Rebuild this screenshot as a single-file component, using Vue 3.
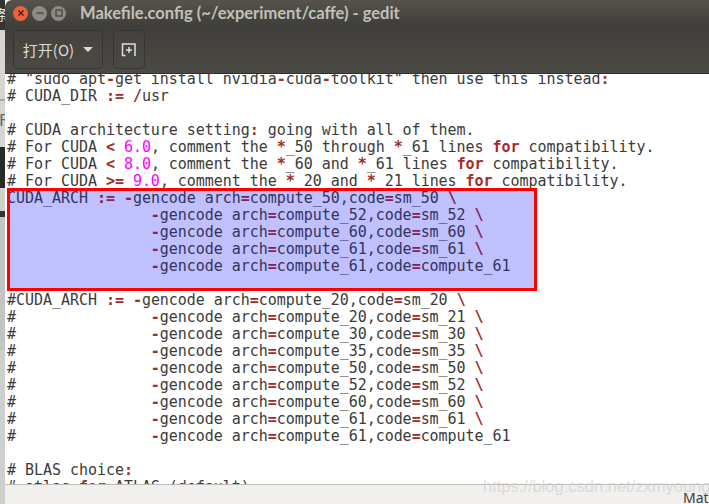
<script setup>
const N = (t) => ({ t })
const K = (t) => ({ t, c: 'k' })
const M = (t) => ({ t, c: 'm' })
const B = (t) => ({ t, c: 'b' })
const top = [
  [N('# "sudo apt'), K('-'), N('get install nvidia'), K('-'), N('cuda'), K('-'), N('toolkit" then use this instead'), K(':')],
  [N('# CUDA_DIR '), K(':='), N(' '), K('/'), N('usr')],
  [N(' ')],
  [N('# CUDA architecture setting'), K(':'), N(' going with all of them.')],
  [N('# For CUDA '), K('<'), N(' '), M('6.0'), N(', comment the '), K('*'), N('_50 through '), K('*'), N('_61 lines '), B('for'), N(' compatibility.')],
  [N('# For CUDA '), K('<'), N(' '), M('8.0'), N(', comment the '), K('*'), N('_60 and '), K('*'), N('_61 lines '), B('for'), N(' compatibility.')],
  [N('# For CUDA '), K('>='), N(' '), M('9.0'), N(', comment the '), K('*'), N('_20 and '), K('*'), N('_21 lines '), B('for'), N(' compatibility.')],
]
const gen = (pre, a, c, tail = true) => {
  const out = [N(pre), K('-'), N('gencode arch'), K('='), N('compute_' + a + ',code'), K('='), N(c)]
  if (tail) out.push(N(' '), K('\\'))
  return out
}
const sel = [
  [N('CUDA_ARCH '), K(':='), N(' '), ...gen('', '50', 'sm_50')],
  gen('                ', '52', 'sm_52'),
  gen('                ', '60', 'sm_60'),
  gen('                ', '61', 'sm_61'),
  gen('                ', '61', 'compute_61', false),
  [N(' ')],
]
const p = '#               '
const rest = [
  [N('#CUDA_ARCH '), K(':='), N(' '), ...gen('', '20', 'sm_20')],
  gen(p, '20', 'sm_21'),
  gen(p, '30', 'sm_30'),
  gen(p, '35', 'sm_35'),
  gen(p, '50', 'sm_50'),
  gen(p, '52', 'sm_52'),
  gen(p, '60', 'sm_60'),
  gen(p, '61', 'sm_61'),
  gen(p, '61', 'compute_61', false),
  [N(' ')],
  [N('# BLAS choice'), K(':')],
  [N('# atlas '), B('for'), N(' ATLAS (default)')],
]
const blocks = [
  { cls: '', lines: top },
  { cls: 'sel', lines: sel },
  { cls: '', lines: rest },
]
</script>

<template>
  <div class="screen">
    <div class="edge">
      <span class="frag cjk">条</span>
      <span class="frag f">F</span>
    </div>
    <div class="win">
      <header class="title">
        <div class="dots">
          <span class="dot close"><svg width="8" height="8" viewBox="0 0 8 8"><path d="M1.500 1.500l5 5M6.500 1.500l-5 5" stroke="#4a1a0c" stroke-width="1.300" /></svg></span>
          <span class="dot"><svg width="8" height="8" viewBox="0 0 8 8"><path d="M0.500 4h7" stroke="#3b3a36" stroke-width="1.200" /></svg></span>
          <span class="dot"><svg width="8" height="8" viewBox="0 0 8 8"><rect x="1" y="1" width="6" height="6" fill="none" stroke="#3b3a36" stroke-width="1.100" /></svg></span>
        </div>
        <span class="name">Makefile.config (~/experiment/caffe) - gedit</span>
      </header>
      <div class="tools">
        <div class="btn open">打开(O)<i class="caret"></i></div>
        <div class="btn new">
          <svg width="16" height="15" viewBox="0 0 16 15"><path d="M1.500 14V2H14V14M1 13.500H4.500M5 8h6M8 5v6" fill="none" stroke="#e0dfd9" stroke-width="1.500" /></svg>
        </div>
      </div>
      <main class="editor">
        <div v-for="(b, i) in blocks" :key="i" :class="['block', b.cls]">
          <div v-for="(l, j) in b.lines" :key="j" class="line"><span v-for="(s, k) in l" :key="k" :class="s.c">{{ s.t }}</span></div>
        </div>
      </main>
      <footer class="status">Mat</footer>
    </div>
    <div class="mark">https://blog.csdn.net/zxmyoung</div>
  </div>
</template>

<style scoped>
.screen { width: 709px; height: 504px; position: relative; overflow: hidden; display: flex; background: #fff; }
.edge { width: 5px; flex: none; position: relative; overflow: hidden; background: linear-gradient(#35342f 0 30px, #d6d5d2 30px 99px, #a9a8a5 99px 101px, #d6d5d2 101px 147px, #2a2a26 147px 188px, #d2d1cc 188px 211px, #33322e 211px 217px, #c4c4c2 217px 350px, #cfcfcd 350px); }
.frag { position: absolute; left: -5px; white-space: nowrap; }
.cjk { top: 4px; font: 14px "Noto Sans CJK SC", sans-serif; color: #e6e6e6; }
.f { top: 111px; left: -1px; font: 16px "DejaVu Sans", sans-serif; color: #5a6d80; }
.win { flex: 1; min-width: 0; display: flex; flex-direction: column; }
.title { height: 26px; flex: none; display: flex; align-items: center; background: linear-gradient(#55534c, #3f3e3a); border-radius: 7px 0 0 0; box-sizing: border-box; padding-left: 8px; }
.dots { display: flex; gap: 4px; }
.dot { width: 15px; height: 15px; border-radius: 50%; background: #8b8a84; display: flex; align-items: center; justify-content: center; }
.dot.close { background: #e9643a; }
.name { margin-left: 14px; font: 700 16.500px "Lato", "Noto Sans", sans-serif; color: #c2c0b8; white-space: nowrap; }
.tools { height: 48px; flex: none; background: linear-gradient(#3f3e3a, #4c4a44); border-bottom: 1px solid #2f2e2b; box-sizing: border-box; display: flex; align-items: flex-start; gap: 10px; padding: 4px 0 0 8px; }
.btn { height: 39px; box-sizing: border-box; border: 1px solid #363531; border-radius: 5px; background: linear-gradient(#43423e, #4b4944); display: flex; align-items: center; justify-content: center; color: #dfdbd2; font: 15px "Noto Sans CJK SC", "Noto Sans", sans-serif; }
.open { width: 90px; }
.new { width: 32px; }
.caret { margin-left: 9px; width: 0; height: 0; border: 5px solid transparent; border-top: 5px solid #dfdbd2; border-bottom: 0; }
.editor { flex: 1; min-height: 0; overflow: hidden; background: #fff; }
.block { padding-left: 2px; }
.block:first-child { margin-top: -3px; }
.line { height: 17px; font: 15px/17px "DejaVu Sans Mono", monospace; letter-spacing: -0.04px; color: #3b3b3b; white-space: pre; position: relative; z-index: 1; }
.sel { position: relative; }
.sel::before, .sel::after { content: ""; position: absolute; left: 2px; top: -2px; width: 530px; height: 103px; box-sizing: border-box; }
.sel::before { background: #c0c0ff; }
.sel::after { border: 3px solid #f00; z-index: 2; }
.sel .line { color: #33335e; }
.sel .k { color: #80264e; }
.k { color: #a52a2a; font-weight: 700; }
.m { color: #ff00ff; }
.b { color: #a52a2a; font-weight: 700; }
.status { height: 20px; flex: none; background: #f1f0ee; border-top: 1px solid #bdbbb6; box-sizing: border-box; padding-left: 678px; white-space: nowrap; overflow: hidden; font: 14px/25px "Noto Sans", sans-serif; color: #3c3c3c; }
.mark { position: absolute; left: 483px; top: 477px; font: 16.500px "Liberation Sans", sans-serif; color: rgba(205, 205, 205, 0.65); white-space: nowrap; }
</style>
